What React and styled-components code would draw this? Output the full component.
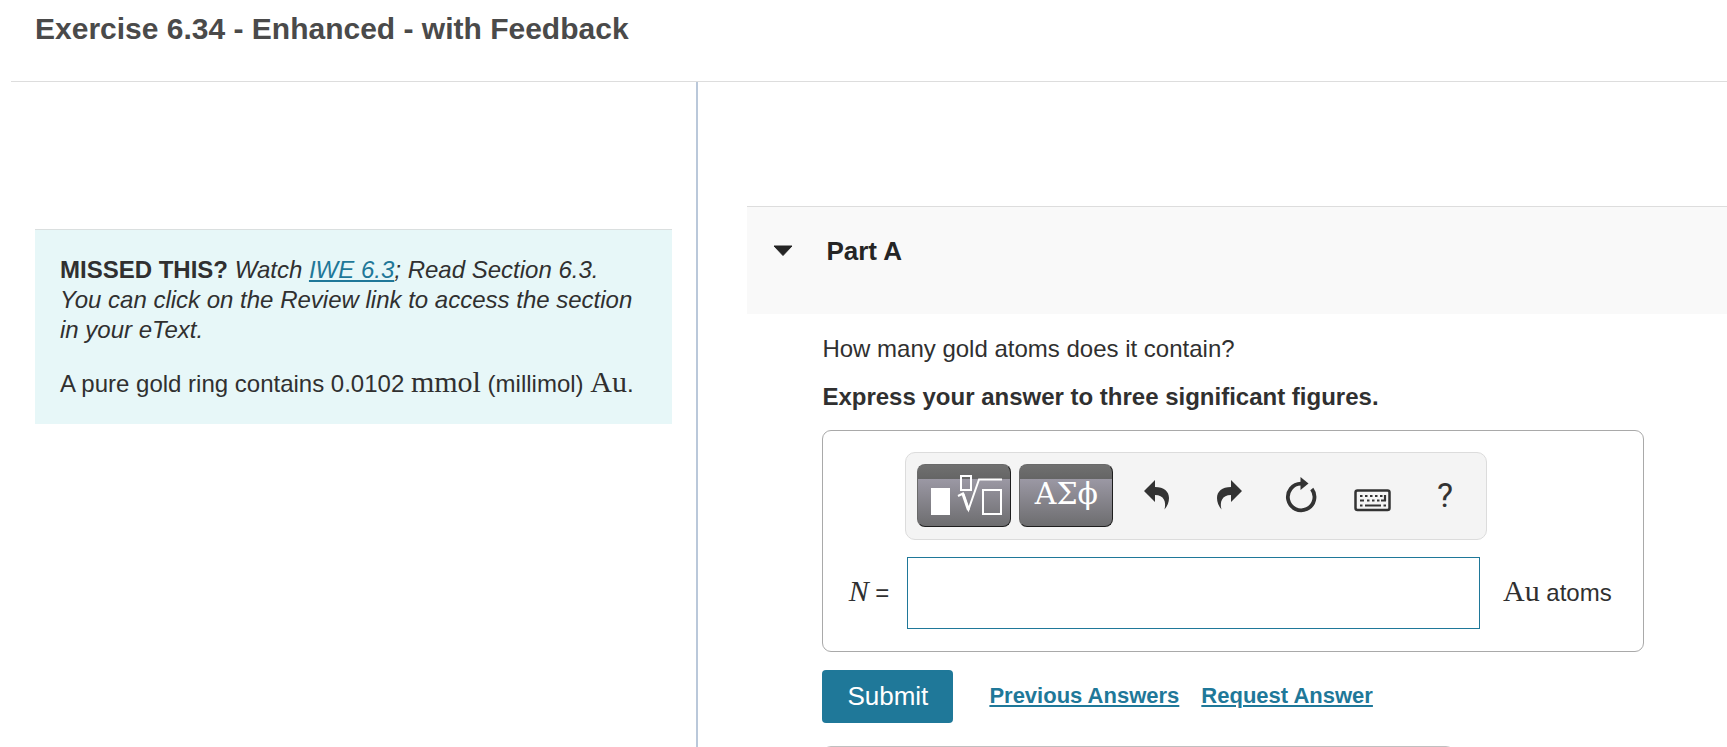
import { useState } from "react";
import styled, { createGlobalStyle } from "styled-components";

const GlobalStyle = createGlobalStyle`
    * {
        box-sizing: border-box;
    }
    body {
        margin: 0;
        background-color: #FFFFFF;
        font-family: "Liberation Sans", Arial, sans-serif;
        font-size: 24px;
        line-height: 30px;
        color: #303030;
    }
`
const Page = styled.div`
    display: flex;
    flex-direction: column;
    height: 100vh;
    padding-left: 11px;
`
const Header = styled.header`
    flex: none;
    height: 82px;
    padding: 10px 24px;
    border-bottom: 1px solid #DDDDDD;
`
const Title = styled.h1`
    margin: 0;
    font-size: 30px;
    line-height: 38px;
    font-weight: 700;
    color: #4A4A4A;
`
const Columns = styled.main`
    display: flex;
    flex: 1;
    min-height: 0;
    overflow: hidden;
`
const LeftColumn = styled.section`
    flex: none;
    width: calc(40% + 1px);
    padding: 147px 24px 0;
    border-right: 2px solid #BAC8DA;
`
const Intro = styled.div`
    padding: 25px;
    border-top: 1px solid #DADFDF;
    background-color: #E7F7F8;
`
const Text = styled.p`
    margin: 0;
    font-weight: ${(props) => (props.$bold ? 700 : 400)};
`
const IntroText = styled(Text)`
    & + & {
        margin-top: 24px;
    }
`
const Link = styled.a`
    color: #1F7899;
    text-decoration: underline;
    text-decoration-thickness: 2px;
    text-underline-offset: 2px;
`
const Roman = styled.span`
    font-family: "Liberation Serif", "Times New Roman", serif;
    font-size: 30px;
    line-height: 0;
`
const RightColumn = styled.section`
    flex: 1;
    min-width: 0;
    padding: 124px 0 0 49px;
`
const PartHeader = styled.div`
    display: flex;
    align-items: flex-start;
    height: 108px;
    padding: 29px 26px;
    border-top: 1px solid #DDDDDD;
    background-color: #F9F9F9;
`
const Toggle = styled.button`
    display: flex;
    align-items: center;
    gap: 33px;
    padding: 0;
    border: none;
    background: none;
    font-family: inherit;
    font-size: 26px;
    line-height: 30px;
    font-weight: 700;
    color: #252525;
    cursor: pointer;
`
const PartBody = styled.div`
    display: flex;
    flex-direction: column;
    padding: 20px 83px 0 75px;
`
const Question = styled(Text)`
    margin-bottom: 18px;
`
const AnswerBox = styled.form`
    display: grid;
    grid-template-columns: 64px minmax(0, 1fr) 132px;
    column-gap: 15px;
    row-gap: 17px;
    align-items: center;
    margin-top: 18px;
    padding: 21px 16px 22px 5px;
    border: 1px solid #A9A9A9;
    border-radius: 9px;
`
const Toolbar = styled.div`
    grid-column: 1 / -1;
    display: flex;
    align-items: center;
    justify-content: space-between;
    height: 88px;
    margin: 0 140px 0 77px;
    padding: 0 21px 2px 11px;
    border: 1px solid #DCDCDC;
    border-radius: 10px;
    background-color: #F4F4F4;
`
const Templates = styled.div`
    display: flex;
    gap: 8px;
`
const TemplateButton = styled.button`
    display: flex;
    align-items: center;
    justify-content: center;
    width: 94px;
    height: 63px;
    padding: 0;
    border: 1px solid #6A6A6A;
    border-right-color: #1E1E1E;
    border-bottom-color: #1E1E1E;
    border-radius: 8px;
    background: linear-gradient(#707070 0, #656565 14px, #9B98A4 14px, #6D6D6F 100%);
    color: #FFFFFF;
    cursor: pointer;
`
const Greek = styled.span`
    padding-bottom: 2px;
    font-family: "DejaVu Serif", serif;
    font-size: 30px;
    line-height: 30px;
`
const Tools = styled.div`
    display: flex;
    gap: 32px;
`
const ToolButton = styled.button`
    display: flex;
    align-items: center;
    justify-content: center;
    width: 40px;
    height: 44px;
    padding: 0;
    border: none;
    background: none;
    font-family: Roboto, sans-serif;
    font-size: 34px;
    line-height: 34px;
    color: #333333;
    cursor: pointer;
`
const Label = styled.label`
    padding-right: 3px;
    text-align: right;
    white-space: nowrap;
`
const Input = styled.input`
    width: 100%;
    height: 72px;
    padding: 0 12px;
    border: 1px solid #1F7899;
    border-radius: 0;
    outline: none;
    background-color: #FFFFFF;
    font-family: inherit;
    font-size: 24px;
    color: #303030;
`
const Unit = styled.span`
    padding-left: 8px;
    white-space: nowrap;
`
const Actions = styled.div`
    display: flex;
    align-items: center;
    gap: 22px;
    margin-top: 18px;
`
const Submit = styled.button`
    width: 131px;
    height: 53px;
    margin-right: 14px;
    border: none;
    border-radius: 4px;
    background-color: #1F7899;
    font-family: inherit;
    font-size: 26px;
    color: #FFFFFF;
    cursor: pointer;
`
const ActionLink = styled(Link)`
    padding-bottom: 2px;
    font-size: 22px;
    font-weight: 700;
`
const Feedback = styled.div`
    width: 77%;
    height: 80px;
    margin-top: 23px;
    border: 1px solid #C0C0C0;
    border-radius: 9px;
`

const CaretIcon = () => (
    <svg width="20" height="12" viewBox="0 0 20 12" aria-hidden="true">
        <path d="M1 1h18L10 10.500z" fill="#252525" stroke="#252525" strokeLinejoin="round" />
    </svg>
)

const RootIcon = () => (
    <svg width="92" height="61" viewBox="0 0 92 61" fill="none" stroke="#FFFFFF" aria-hidden="true">
        <rect x="13" y="23" width="19" height="27" fill="#FFFFFF" stroke="none" />
        <rect x="43" y="11" width="10" height="14" strokeWidth="2" />
        <path d="M40 31l5-2.500 5.500 16L61 14.500h23" strokeWidth="2" />
        <path d="M45 29l5.500 16" strokeWidth="3" />
        <rect x="65" y="25" width="18" height="24" strokeWidth="2" />
    </svg>
)

const UndoIcon = () => (
    <svg width="26" height="30" viewBox="0 0 26 30" aria-hidden="true">
        <path d="M0 11L11 0v7c9 0 14 4.500 14 11 0 4-1.500 8-4.500 11.500C22.500 22 20 15 11 15v7z" fill="#333333" />
    </svg>
)

const RedoIcon = () => (
    <svg width="26" height="30" viewBox="0 0 26 30" aria-hidden="true">
        <path d="M26 11L15 0v7C6 7 1 11.500 1 18c0 4 1.500 8 4.500 11.500C3.500 22 6 15 15 15v7z" fill="#333333" />
    </svg>
)

const ResetIcon = () => (
    <svg width="32" height="36" viewBox="0 0 32 36" aria-hidden="true">
        <path d="M26.800 12A13.300 13.300 0 1 1 16 6.700" fill="none" stroke="#333333" strokeWidth="3.800" />
        <path d="M15.500 0l8 6.500-8 6.500z" fill="#333333" />
    </svg>
)

const KeyboardIcon = () => (
    <svg width="38" height="34" viewBox="0 0 38 34" fill="none" stroke="#333333" aria-hidden="true">
        <rect x="1.500" y="12.500" width="34" height="19.500" rx="2" strokeWidth="2.500" />
        <path d="M6 18h23" strokeWidth="2.200" strokeDasharray="2.500 2.500" />
        <path d="M6 22.500h4M13 22.500h2.500M18 22.500h2.500M23 22.500h2.500M27 22.500h5M31 17v6" strokeWidth="2.200" />
        <path d="M6 27.500h2.500M11 27.500h16M29.500 27.500h2.500" strokeWidth="2.200" />
    </svg>
)

const App = () => {
    const [open, setOpen] = useState(true)
    const [answer, setAnswer] = useState('')

    return(
        <>
            <GlobalStyle />
            <Page>
                <Header>
                    <Title>Exercise 6.34 - Enhanced - with Feedback</Title>
                </Header>
                <Columns>
                    <LeftColumn>
                        <Intro>
                            <IntroText>
                                <b>MISSED THIS?</b> <i>Watch <Link href="#iwe">IWE 6.3</Link>; Read Section 6.3.<br />You can click on the Review link to access the section in your eText.</i>
                            </IntroText>
                            <IntroText>
                                A pure gold ring contains 0.0102 <Roman>mmol</Roman> (millimol) <Roman>Au</Roman>.
                            </IntroText>
                        </Intro>
                    </LeftColumn>
                    <RightColumn>
                        <PartHeader>
                            <Toggle type="button" aria-expanded={open} onClick={() => {setOpen(!open)}}>
                                <CaretIcon />
                                Part A
                            </Toggle>
                        </PartHeader>
                        {open && (
                            <PartBody>
                                <Question>How many gold atoms does it contain?</Question>
                                <Text $bold>Express your answer to three significant figures.</Text>
                                <AnswerBox id="answer-form" onSubmit={(e) => {e.preventDefault()}}>
                                    <Toolbar role="toolbar">
                                        <Templates>
                                            <TemplateButton type="button" aria-label="Templates"><RootIcon /></TemplateButton>
                                            <TemplateButton type="button" aria-label="Symbols"><Greek>ΑΣϕ</Greek></TemplateButton>
                                        </Templates>
                                        <Tools>
                                            <ToolButton type="button" aria-label="Undo"><UndoIcon /></ToolButton>
                                            <ToolButton type="button" aria-label="Redo"><RedoIcon /></ToolButton>
                                            <ToolButton type="button" aria-label="Reset"><ResetIcon /></ToolButton>
                                            <ToolButton type="button" aria-label="Keyboard shortcuts"><KeyboardIcon /></ToolButton>
                                            <ToolButton type="button" aria-label="Help">?</ToolButton>
                                        </Tools>
                                    </Toolbar>
                                    <Label htmlFor="answer"><Roman as="i">N</Roman> =</Label>
                                    <Input id="answer" type="text" value={answer} onChange={(e) => {setAnswer(e.target.value)}} />
                                    <Unit><Roman>Au</Roman> atoms</Unit>
                                </AnswerBox>
                                <Actions>
                                    <Submit type="submit" form="answer-form">Submit</Submit>
                                    <ActionLink href="#previous">Previous Answers</ActionLink>
                                    <ActionLink href="#request">Request Answer</ActionLink>
                                </Actions>
                                <Feedback />
                            </PartBody>
                        )}
                    </RightColumn>
                </Columns>
            </Page>
        </>
    )
}

export default App
